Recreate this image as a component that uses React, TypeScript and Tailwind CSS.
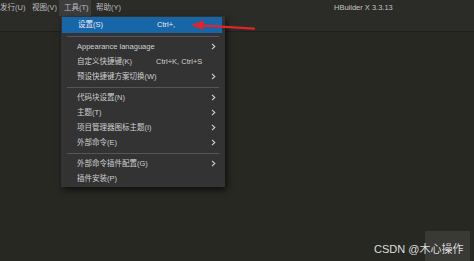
import React from "react";

const font = { fontFamily: '"Liberation Sans", "Noto Sans CJK SC", sans-serif' };

type Item =
  | { type: "sep" }
  | { type: "item"; label: string; shortcut?: string; sub?: boolean; active?: boolean };

const items: Item[] = [
  { type: "item", label: "设置(S)", shortcut: "Ctrl+,", active: true },
  { type: "sep" },
  { type: "item", label: "Appearance lanaguage", sub: true },
  { type: "item", label: "自定义快捷键(K)", shortcut: "Ctrl+K, Ctrl+S" },
  { type: "item", label: "预设快捷键方案切换(W)", sub: true },
  { type: "sep" },
  { type: "item", label: "代码块设置(N)", sub: true },
  { type: "item", label: "主题(T)", sub: true },
  { type: "item", label: "项目管理器图标主题(I)", sub: true },
  { type: "item", label: "外部命令(E)", sub: true },
  { type: "sep" },
  { type: "item", label: "外部命令插件配置(G)", sub: true },
  { type: "item", label: "插件安装(P)" },
];

const menus = ["发行(U)", "视图(V)", "工具(T)", "帮助(Y)"];

function Chevron() {
  return (
    <svg width="5" height="7" viewBox="0 0 5 7" className="absolute right-[9px]">
      <path d="M1 0.8 L3.8 3.5 L1 6.2" fill="none" stroke="#d0d0d0" strokeWidth="1.1" />
    </svg>
  );
}

function ToolsMenu() {
  return (
    <div className="absolute left-[61px] top-[16px] w-[164px] bg-[#333333] pt-[1px] pb-[1px] shadow-[2px_3px_6px_rgba(0,0,0,0.6)] text-[7.5px] text-[#cfcfcf]">
      {items.map((it, i) =>
        it.type === "sep" ? (
          <div key={i} className="h-[6px] flex items-center px-[6px]">
            <div className="h-px w-full bg-[#555555]" />
          </div>
        ) : (
          <div
            key={i}
            className={
              "relative flex items-center pl-[16px] whitespace-nowrap " +
              (it.active ? "h-[16px] ml-[1px] mr-[3px] bg-[#1766a8] text-[#e8eef5]" : "h-[15px]")
            }
          >
            <span>{it.label}</span>
            {it.shortcut && <span className="absolute left-[95px]">{it.shortcut}</span>}
            {it.sub && <Chevron />}
          </div>
        )
      )}
    </div>
  );
}

export default function App() {
  return (
    <div className="relative w-[474px] h-[261px] overflow-hidden bg-[#272822] flex flex-col" style={font}>
      <div className="h-[32px] shrink-0 bg-[#2b2b28] border-b border-[#1f201c]">
        <div className="flex h-[16px] items-center text-[7.5px] text-[#bdbdbd]">
          {menus.map((m, i) => (
            <div
              key={m}
              className={
                "h-[16px] w-[32px] pl-[5px] flex items-center whitespace-nowrap " +
                (i === 0 ? "ml-[-5px] " : "") +
                (i === 2 ? "bg-[#3d3d3d]" : "")
              }
            >
              {m}
            </div>
          ))}
          <div className="ml-[211px] whitespace-nowrap text-[#c4c4c4]">HBuilder X 3.3.13</div>
        </div>
      </div>

      <div className="flex-1 flex flex-col justify-end">
        <div className="flex justify-end">
          <div className="w-[45px] h-[30px] bg-[#393936] mr-[4px]" />
        </div>
      </div>

      <ToolsMenu />

      <svg className="absolute left-[188px] top-[18px]" width="70" height="16" viewBox="0 0 70 16">
        <line x1="12" y1="7.4" x2="66" y2="10.6" stroke="#e0242b" strokeWidth="2.2" strokeLinecap="round" />
        <polygon points="3,7 16,2.5 15,12" fill="#e0242b" />
      </svg>

      <div className="absolute left-[374px] top-[242px] text-[11px] leading-[14px] text-[#dedede] whitespace-nowrap">
        CSDN @木心操作
      </div>
    </div>
  );
}
